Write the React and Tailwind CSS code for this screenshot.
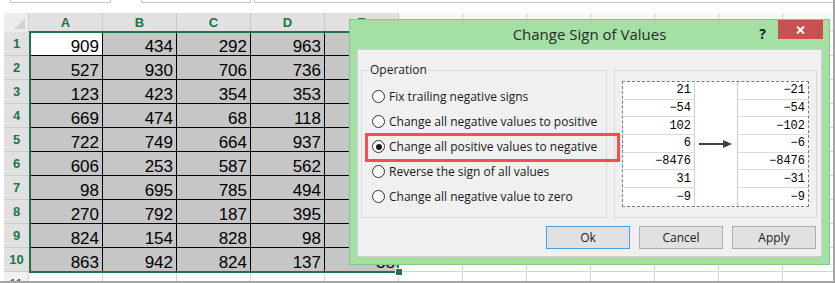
import React from "react";

// column E is hidden behind the dialog except the bottom of row 10
const DATA = [
  [909, 434, 292, 963, ""],
  [527, 930, 706, 736, ""],
  [123, 423, 354, 353, ""],
  [669, 474, 68, 118, ""],
  [722, 749, 664, 937, ""],
  [606, 253, 587, 562, ""],
  [98, 695, 785, 494, ""],
  [270, 792, 187, 395, ""],
  [824, 154, 828, 98, ""],
  [863, 942, 824, 137, 38],
];

const OPTIONS = [
  "Fix trailing negative signs",
  "Change all negative values to positive",
  "Change all positive values to negative",
  "Reverse the sign of all values",
  "Change all negative value to zero",
];

const BEFORE = ["21", "−54", "102", "6", "−8476", "31", "−9"];
const AFTER = ["−21", "−54", "−102", "−6", "−8476", "−31", "−9"];

const EXTRA_COLS = 7;

function SheetRow({ n, values }) {
  return (
    <div className="flex h-[24px] shrink-0">
      <div className="w-[25px] shrink-0 flex items-center justify-center bg-[#e1e1e1] border-b border-[#cdcdcd] text-[13px] font-bold text-[#217346]">
        {n}
      </div>
      {values.map((v, i) => (
        <div
          key={i}
          className={`w-[74px] shrink-0 flex items-end justify-end pr-[3px] border-r border-b border-black text-[17px] leading-[17px] text-black ${
            n === 1 && i === 0 ? "bg-white" : "bg-[#c6c6c6]"
          }`}
        >
          {v}
        </div>
      ))}
      {Array.from({ length: EXTRA_COLS }).map((_, i) => (
        <div key={i} className="w-[64px] shrink-0 border-r border-b border-[#d4d4d4] bg-white" />
      ))}
    </div>
  );
}

function Radio({ label, checked }) {
  return (
    <div className="flex h-[25px] items-center gap-[4px]">
      <span className="w-[13px] h-[13px] rounded-full border border-[#333] bg-white flex items-center justify-center">
        {checked && <span className="w-[6px] h-[6px] rounded-full bg-[#1a1a1a]" />}
      </span>
      <span>{label}</span>
    </div>
  );
}

function Button({ children, primary }) {
  return (
    <button
      className={`w-[84px] h-[23px] bg-[#e1e1e1] border text-[12px] text-[#1a1a1a] ${
        primary ? "border-[#4a9ae0]" : "border-[#adadad]"
      }`}
    >
      {children}
    </button>
  );
}

function PreviewCol({ values }) {
  return (
    <div className="flex flex-col">
      {values.map((v, i) => (
        <div
          key={i}
          className={`h-[17.7px] flex items-center justify-end pr-[3px] leading-[14px] ${
            i < 6 ? "border-b border-[#dcdcdc]" : ""
          }`}
        >
          {v}
        </div>
      ))}
    </div>
  );
}

export default function App() {
  return (
    <div className="relative w-[835px] h-[283px] overflow-hidden bg-white border-r-2 border-b-2 border-[#a5a5a5] font-['Liberation_Sans',Arial,sans-serif]">
      {/* formula bar remnants */}
      <div className="flex h-[13px] items-start">
        <div className="ml-[10px] w-[101px] h-[3px] border-x border-b border-[#c6c6c6]" />
        <div className="ml-[30px] w-[110px] h-[3px] border-x border-b border-[#c6c6c6]" />
        <div className="ml-[3px] flex-1 h-[3px] border-l border-b border-[#c6c6c6]" />
      </div>

      {/* sheet */}
      <div className="pl-[4px] flex flex-col">
        <div className="flex h-[19px] shrink-0">
          <div className="relative w-[25px] shrink-0 bg-[#ececec] border-r border-[#d0d0d0]">
            <svg className="absolute right-[3px] bottom-[3px]" width="11" height="11">
              <polygon points="11,0 11,11 0,11" fill="#d2d2d2" />
            </svg>
          </div>
          {["A", "B", "C", "D", "E"].map((c) => (
            <div
              key={c}
              className="w-[74px] shrink-0 flex items-center justify-center bg-[#e1e1e1] border-r border-[#c9c9c9] text-[13px] font-bold text-[#217346]"
            >
              {c}
            </div>
          ))}
          {Array.from({ length: EXTRA_COLS }).map((_, i) => (
            <div key={i} className="w-[64px] shrink-0 bg-[#f7f7f7] border-r border-b border-[#d4d4d4]" />
          ))}
        </div>
        {DATA.map((row, i) => (
          <SheetRow key={i} n={i + 1} values={row} />
        ))}
        <div className="flex h-[24px] shrink-0">
          <div className="w-[25px] shrink-0 flex items-center justify-center bg-[#f0f0f0] border-r border-[#d4d4d4] text-[13px] text-[#444]">
            11
          </div>
          {Array.from({ length: 5 }).map((_, i) => (
            <div key={i} className="w-[74px] shrink-0 border-r border-b border-[#d4d4d4]" />
          ))}
          {Array.from({ length: EXTRA_COLS }).map((_, i) => (
            <div key={i} className="w-[64px] shrink-0 border-r border-b border-[#d4d4d4]" />
          ))}
        </div>
      </div>

      {/* selection outline + fill handle */}
      <div className="absolute left-[29px] top-[31px] w-[370px] h-[242px] border-2 border-[#217346]" />
      <div className="absolute left-[396px] top-[269px] w-[6px] h-[6px] bg-[#217346] outline outline-1 outline-white" />

      {/* dialog */}
      <div className="absolute left-[349px] top-[19px] w-[481px] h-[246px] bg-[#a4e0a4] border border-[#86c786] flex flex-col font-['Open_Sans',sans-serif]">
        <div className="grid grid-cols-[70px_1fr_70px] h-[29px] shrink-0">
          <div />
          <div className="flex items-center justify-center text-[15px] text-[#2b2b2b]">Change Sign of Values</div>
          <div className="flex items-start justify-end">
            <span className="mt-[3px] mr-[12px] text-[14px] font-bold text-[#222]">?</span>
            <span className="w-[45px] h-[19px] mr-[6px] bg-[#c75050] flex items-center justify-center">
              <svg width="9" height="8" viewBox="0 0 9 8">
                <path d="M1 0.5 L8 7.5 M8 0.5 L1 7.5" stroke="#fff" strokeWidth="2" />
              </svg>
            </span>
          </div>
        </div>

        <div className="mx-[7px] h-[208px] bg-[#f0f0f0] border border-[#cfcfcf] flex flex-col text-[12px] text-[#1a1a1a]">
          <div className="flex gap-[7px] mt-[20px] ml-[3px]">
            <div className="relative w-[246px] h-[148px] border border-[#d9d9d9] pt-[13px] pl-[10px]">
              <span className="absolute left-[7px] top-[-10px] px-[1px] bg-[#f0f0f0]">Operation</span>
              {OPTIONS.map((o, i) => (
                <Radio key={o} label={o} checked={i === 2} />
              ))}
            </div>
            <div className="w-[203px] h-[148px] border border-[#d9d9d9] pt-[10px] pl-[7px]">
              <div className="w-[187px] h-[126px] overflow-hidden border border-dashed border-[#7a7a7a] bg-white flex font-['Liberation_Mono',monospace] text-[12px] text-black">
                <div className="w-[72px] border-r border-[#cfcfcf]">
                  <PreviewCol values={BEFORE} />
                </div>
                <div className="w-[43px] flex flex-col border-r border-[#cfcfcf]">
                  {BEFORE.map((_, i) => (
                    <div key={i} className="h-[17.7px] flex items-center justify-center">
                      {i === 3 && (
                        <svg width="34" height="10" viewBox="0 0 34 10">
                          <line x1="0" y1="5" x2="26" y2="5" stroke="#404040" strokeWidth="2" />
                          <polygon points="24,1 33,5 24,9" fill="#404040" />
                        </svg>
                      )}
                    </div>
                  ))}
                </div>
                <div className="flex-1">
                  <PreviewCol values={AFTER} />
                </div>
              </div>
            </div>
          </div>
          <div className="flex justify-end gap-[9px] mt-[8px] mr-[5px]">
            <Button primary>Ok</Button>
            <Button>Cancel</Button>
            <Button>Apply</Button>
          </div>
        </div>
      </div>

      {/* annotation */}
      <div className="absolute left-[365px] top-[133px] w-[255px] h-[29px] border-[3px] border-[#f24f4f]" />
    </div>
  );
}
